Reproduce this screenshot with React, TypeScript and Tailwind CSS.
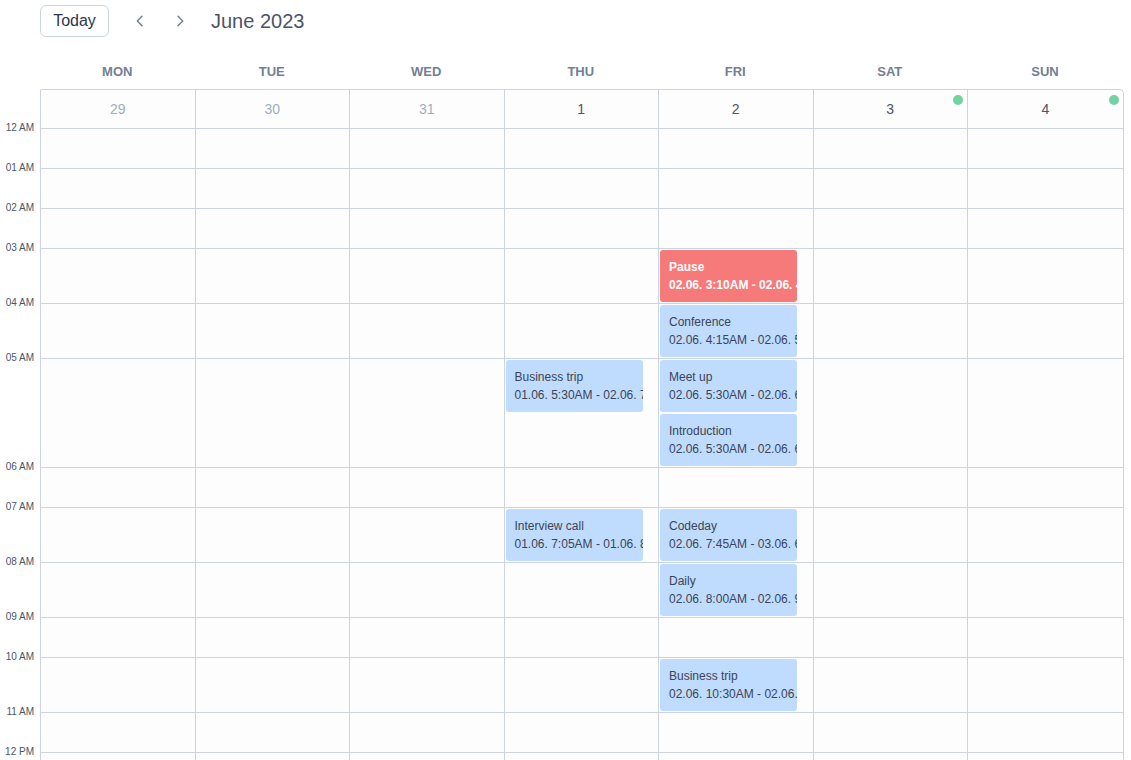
import React from 'react';

type CalEvent = {
  title: string;
  time: string;
  tone?: 'red' | 'blue';
};

const days = [
  { name: 'MON', date: '29', muted: true },
  { name: 'TUE', date: '30', muted: true },
  { name: 'WED', date: '31', muted: true },
  { name: 'THU', date: '1' },
  { name: 'FRI', date: '2' },
  { name: 'SAT', date: '3', dot: true },
  { name: 'SUN', date: '4', dot: true },
];

const hours = ['12 AM', '01 AM', '02 AM', '03 AM', '04 AM', '05 AM', '06 AM', '07 AM', '08 AM', '09 AM', '10 AM', '11 AM', '12 PM'];

// events keyed by hour label, then by day index (0 = MON)
const events: Record<string, Record<number, CalEvent[]>> = {
  '03 AM': { 4: [{ title: 'Pause', time: '02.06. 3:10AM - 02.06. 4:00AM', tone: 'red' }] },
  '04 AM': { 4: [{ title: 'Conference', time: '02.06. 4:15AM - 02.06. 5:00AM' }] },
  '05 AM': {
    3: [{ title: 'Business trip', time: '01.06. 5:30AM - 02.06. 7:00AM' }],
    4: [
      { title: 'Meet up', time: '02.06. 5:30AM - 02.06. 6:30AM' },
      { title: 'Introduction', time: '02.06. 5:30AM - 02.06. 6:00AM' },
    ],
  },
  '07 AM': {
    3: [{ title: 'Interview call', time: '01.06. 7:05AM - 01.06. 8:00AM' }],
    4: [{ title: 'Codeday', time: '02.06. 7:45AM - 03.06. 6:00AM' }],
  },
  '08 AM': { 4: [{ title: 'Daily', time: '02.06. 8:00AM - 02.06. 9:00AM' }] },
  '10 AM': { 4: [{ title: 'Business trip', time: '02.06. 10:30AM - 02.06. 11:30AM' }] },
};

const cols = 'grid grid-cols-[40px_repeat(6,154.5px)_minmax(0,1fr)]';

function EventCard({ ev }: { ev: CalEvent }) {
  const red = ev.tone === 'red';
  return (
    <div
      className={
        red
          ? 'w-[137px] h-[52px] rounded-[3px] bg-[#f77a7a] text-white font-bold pl-[9px] pt-[8px] text-[12px] leading-[18px] overflow-hidden whitespace-nowrap'
          : 'w-[137px] h-[52px] rounded-[3px] bg-[#bfdbfe] text-[#3b4556] pl-[9px] pt-[8px] text-[12px] leading-[18px] overflow-hidden whitespace-nowrap'
      }
    >
      <div>{ev.title}</div>
      <div>{ev.time}</div>
    </div>
  );
}

function ChevronLeft() {
  return (
    <svg width="16" height="16" viewBox="0 0 24 24" fill="none" stroke="#718096" strokeWidth="2.2" strokeLinecap="round" strokeLinejoin="round">
      <path d="M15 5l-7 7 7 7" />
    </svg>
  );
}

function ChevronRight() {
  return (
    <svg width="16" height="16" viewBox="0 0 24 24" fill="none" stroke="#718096" strokeWidth="2.2" strokeLinecap="round" strokeLinejoin="round">
      <path d="M9 5l7 7-7 7" />
    </svg>
  );
}

export default function App() {
  return (
    <div className="w-[1131px] h-[760px] overflow-hidden bg-white font-['Liberation_Sans',Arial,sans-serif]">
      <div className="flex items-center h-[41px] pl-[40px] pt-[1px]">
        <button className="h-[32px] w-[69px] rounded-[6px] border border-[#cbd5e1] text-[16px] text-[#2d3748] bg-white">
          Today
        </button>
        <div className="flex items-center gap-[24px] ml-[23px]">
          <ChevronLeft />
          <ChevronRight />
        </div>
        <div className="ml-[23px] text-[20px] text-[#4a5568]">June 2023</div>
      </div>

      <div className="w-[1124px]">
        <div className={cols + ' h-[48px] items-end pb-[8px] pr-[1px]'}>
          <div />
          {days.map((d) => (
            <div key={d.name} className="text-center text-[13px] font-bold text-[#718096]">
              {d.name}
            </div>
          ))}
        </div>

        <div className={cols}>
          <div />
          {days.map((d, i) => (
            <div
              key={d.name}
              className={
                'relative h-[39px] flex items-center justify-center border-t border-l border-[#cbd5e1] bg-[#fdfdfd] text-[14px] ' +
                (d.muted ? 'text-[#a0aec0] ' : 'text-[#4a5568] ') +
                (i === 6 ? 'border-r rounded-tr-[5px] ' : '') +
                (i === 0 ? 'rounded-tl-[2px]' : '')
              }
            >
              {d.date}
              {d.dot && <span className="absolute top-[5px] right-[4px] w-[10px] h-[10px] rounded-full bg-[#72d3a0]" />}
            </div>
          ))}

          {hours.map((h) => (
            <React.Fragment key={h}>
              <div className="relative">
                <div className="absolute right-[6px] -top-[6px] text-[10px] leading-[12px] text-[#4a5568] whitespace-nowrap">
                  {h}
                </div>
              </div>
              {days.map((d, i) => {
                const list = events[h]?.[i] ?? [];
                return (
                  <div
                    key={d.name + h}
                    className={
                      'min-h-[40px] border-t border-l border-[#cbd5e1] bg-[#fdfdfd] p-[1px] flex flex-col gap-[2px] ' +
                      (i === 6 ? 'border-r' : '')
                    }
                  >
                    {list.map((ev) => (
                      <EventCard key={ev.title + ev.time} ev={ev} />
                    ))}
                  </div>
                );
              })}
            </React.Fragment>
          ))}
        </div>
      </div>
    </div>
  );
}
